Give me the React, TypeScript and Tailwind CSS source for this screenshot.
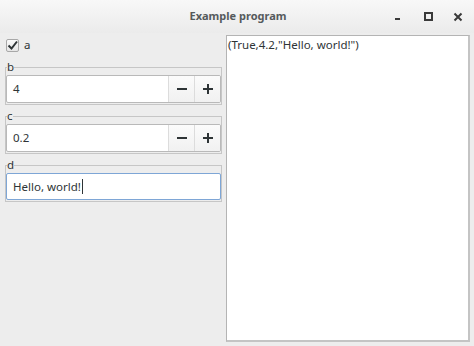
import React from 'react';

const font = { fontFamily: '"Noto Sans", "Open Sans", sans-serif' };

function SpinRow({ value }: { value: string }) {
  return (
    <div className="flex h-[28px] border border-[#b9b9b9] bg-white rounded-[2px] overflow-hidden">
      <div className="flex-1 flex items-center pl-[6px] text-[11.5px] text-[#2e3436]">{value}</div>
      <div className="w-[26px] flex items-center justify-center border-l border-[#dcdcdc] bg-gradient-to-b from-[#fbfbfb] to-[#f1f1f1]">
        <svg width="10" height="10" viewBox="0 0 10 10">
          <rect x="0" y="4" width="10" height="2" fill="#2e3436" />
        </svg>
      </div>
      <div className="w-[26px] flex items-center justify-center border-l border-[#dcdcdc] bg-gradient-to-b from-[#fbfbfb] to-[#f1f1f1]">
        <svg width="10" height="10" viewBox="0 0 10 10">
          <rect x="0" y="4" width="10" height="2" fill="#2e3436" />
          <rect x="4" y="0" width="2" height="10" fill="#2e3436" />
        </svg>
      </div>
    </div>
  );
}

function Frame({ label, children }: { label: string; children: React.ReactNode }) {
  return (
    <fieldset className="border border-[#c6c6c6] px-0 pb-[1px] pt-[2px] mx-0">
      <legend className="text-[11.5px] leading-[12px] text-[#2e3436] px-0 ml-[1px]">{label}</legend>
      {children}
    </fieldset>
  );
}

export default function App() {
  return (
    <div className="w-[474px] h-[346px] bg-[#ededed] flex flex-col overflow-hidden" style={font}>
      {/* Barre de titre */}
      <div className="h-[33px] flex items-center justify-end bg-gradient-to-b from-[#f8f8f8] to-[#ebebeb] relative">
        <div className="absolute inset-x-0 top-0 h-full flex items-center justify-center pl-[2px] text-[11px] font-bold text-[#555a5c]">
          Example program
        </div>
        <div className="flex items-center pr-[1px]">
          <div className="w-[30px] flex justify-center">
            <svg width="8" height="8" viewBox="0 0 8 8">
              <rect x="1" y="5" width="5" height="2" fill="#3a3a3a" />
            </svg>
          </div>
          <div className="w-[30px] flex justify-center">
            <svg width="9" height="9" viewBox="0 0 9 9">
              <rect x="1" y="1" width="7" height="7" fill="none" stroke="#3a3a3a" strokeWidth="2" />
            </svg>
          </div>
          <div className="w-[30px] flex justify-center">
            <svg width="10" height="10" viewBox="0 0 10 10">
              <path d="M1.5 1.5 L8.5 8.5 M8.5 1.5 L1.5 8.5" stroke="#3a3a3a" strokeWidth="2" />
            </svg>
          </div>
        </div>
      </div>

      {/* Contenu */}
      <div className="flex-1 flex pt-[2px] pb-[4px] pl-[5px] pr-[4px] gap-[4px]">
        <div className="w-[217px] flex flex-col pt-[3px]">
          <div className="flex items-center gap-[5px] h-[14px] pl-[1px]">
            <div className="w-[13px] h-[13px] border border-[#a8a8a8] rounded-[2px] bg-gradient-to-b from-[#fafafa] to-[#e6e6e6] flex items-center justify-center">
              <svg width="11" height="11" viewBox="0 0 11 11">
                <path d="M1.5 5.5 L4.5 8.5 L10 1.5" fill="none" stroke="#2e3436" strokeWidth="2" />
              </svg>
            </div>
            <span className="text-[11.5px] text-[#2e3436]">a</span>
          </div>
          <div className="mt-[9px] flex flex-col gap-[5px]">
            <Frame label="b">
              <SpinRow value="4" />
            </Frame>
            <Frame label="c">
              <SpinRow value="0.2" />
            </Frame>
            <Frame label="d">
              <div className="h-[27px] border border-[#7ea6d6] bg-white rounded-[2px] flex items-center pl-[6px] text-[11.5px] text-[#2e3436]">
                Hello, world!<span className="inline-block w-px h-[15px] bg-[#2e3436] ml-px" />
              </div>
            </Frame>
          </div>
        </div>
        <div className="flex-1 bg-white border border-[#b4b4b4] border-r-[2px] border-b-[2px] border-r-[#c4c4c4] border-b-[#c4c4c4] pl-[1px] pt-[1px] text-[11.5px] text-[#2e3436] leading-[16px]">
          (True,4.2,"Hello, world!")
        </div>
      </div>
    </div>
  );
}
